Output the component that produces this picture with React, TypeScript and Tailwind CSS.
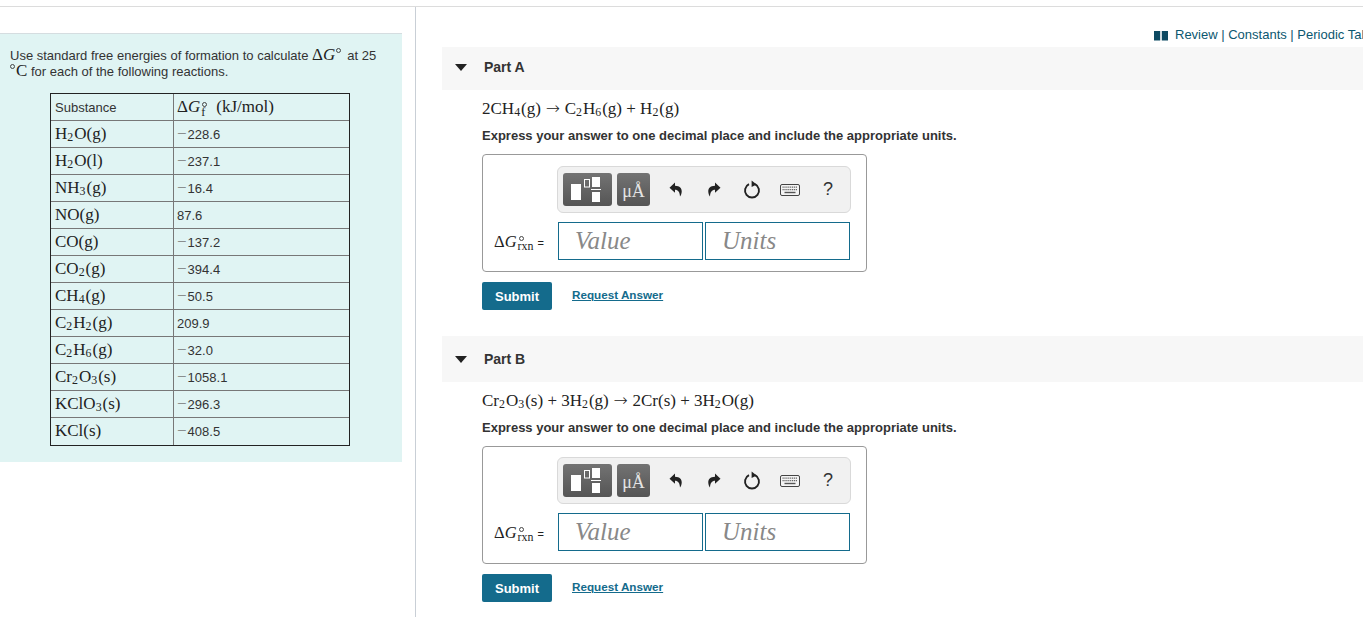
import type { ReactNode } from 'react';

const serif = "font-['Liberation_Serif',serif]";

// chemical formula written as text, digits after "_" become subscripts
const Formula = ({ text, className = '' }: { text: string; className?: string }) => {
  const parts = text.split(/(_\d|→)/);
  return (
    <span className={`${serif} text-[#222] whitespace-nowrap ${className}`}>
      {parts.map((part, i) => {
        if (part === '→') {
          return <span key={i} className="font-['DejaVu_Sans',sans-serif] text-[17px] font-light leading-none mx-[0.5px]">→</span>;
        }
        if (part.startsWith('_')) {
          return (
            <sub key={i} className="text-[0.7em] leading-none align-baseline relative top-[0.18em] mr-[1px]">
              {part.slice(1)}
            </sub>
          );
        }
        return <span key={i}>{part}</span>;
      })}
    </span>
  );
};

const rows = [
  ['H_2O(g)', '−228.6'],
  ['H_2O(l)', '−237.1'],
  ['NH_3(g)', '−16.4'],
  ['NO(g)', '87.6'],
  ['CO(g)', '−137.2'],
  ['CO_2(g)', '−394.4'],
  ['CH_4(g)', '−50.5'],
  ['C_2H_2(g)', '209.9'],
  ['C_2H_6(g)', '−32.0'],
  ['Cr_2O_3(s)', '−1058.1'],
  ['KClO_3(s)', '−296.3'],
  ['KCl(s)', '−408.5'],
];

const Ring = ({ className = '' }: { className?: string }) => (
  <span className={`inline-block w-[5px] h-[5px] rounded-full border border-[#444] ${className}`} />
);

// delta G with the degree ring above and an optional subscript under it
const Delta = ({ sub }: { sub?: string }) => (
  <span className={`${serif} whitespace-nowrap leading-none`}>
    Δ<i>G</i>
    {sub ? (
      <span className="relative ml-[1px] text-[0.72em] top-[0.3em]">
        <Ring className="absolute left-[1px] top-[-3px]" />
        {sub}
      </span>
    ) : (
      <Ring className="relative top-[-7px] ml-[1px]" />
    )}
  </span>
);

const Value = ({ value }: { value: string }) => {
  if (!value.startsWith('−')) return <>{value}</>;
  return (
    <>
      <span className={`${serif} text-[17px] leading-none text-[#777]`}>−</span>
      <span className="ml-[1px]">{value.slice(1)}</span>
    </>
  );
};

const DataTable = () => (
  <div className="ml-[50px] mt-[15px] w-[300px] border border-[#222]">
    <div className="flex h-[27px] border-b border-[#777]">
      <div className="w-[123px] border-r border-[#777] pl-[4px] text-[13px] leading-[27px] text-[#333]">Substance</div>
      <div className="pl-[3px] text-[17px] leading-[26px] text-[#222]">
        <Delta sub="f" />
        <span className={`${serif} ml-[11px]`}>(kJ/mol)</span>
      </div>
    </div>
    {rows.map(([name, value], i) => (
      <div key={name} className={`flex h-[27px] ${i < rows.length - 1 ? 'border-b border-[#777]' : ''}`}>
        <div className="w-[123px] border-r border-[#777] pl-[4px] text-[17px] leading-[26px]">
          <Formula text={name} />
        </div>
        <div className="pl-[3px] text-[13px] leading-[28px] text-[#333]">
          <Value value={value} />
        </div>
      </div>
    ))}
  </div>
);

const TemplatesIcon = () => (
  <svg width="49" height="33" viewBox="0 0 49 33">
    <rect x="8" y="11" width="10" height="16" fill="#fff" />
    <rect x="21.5" y="6.5" width="5" height="7.5" fill="none" stroke="#fff" />
    <rect x="29" y="4" width="8" height="10" fill="#fff" />
    <rect x="28" y="16" width="10" height="1" fill="#fff" />
    <rect x="29" y="19" width="8" height="10" fill="#fff" />
  </svg>
);

const Arrow = ({ flip }: { flip?: boolean }) => (
  <svg width="14" height="15" viewBox="0 0 14 15" className={flip ? '-scale-x-100' : ''}>
    <path d="M6 0.5 L0.5 5.8 L6 10.8 V7.8 C9 7.8 10.8 10 11 14.5 C13.6 11 14.2 4 6 3.8 Z" fill="#222" />
  </svg>
);

const ResetIcon = () => (
  <svg width="18" height="19" viewBox="0 0 18 19" fill="none">
    <path d="M6 4.2 A7 7 0 1 0 12 4.2" stroke="#222" strokeWidth="1.9" />
    <path d="M8.6 0.5 L13.6 4.4 L8.6 7 Z" fill="#222" />
  </svg>
);

const KeyboardIcon = () => (
  <svg width="20" height="12" viewBox="0 0 20 12">
    <rect x="0.5" y="0.5" width="19" height="11" rx="1.5" fill="#f4f4f4" stroke="#444" />
    <path d="M2.5 3.2H17.5M2.5 5.6H17.5" stroke="#666" strokeWidth="1.2" strokeDasharray="1.2 0.7" />
    <path d="M4.5 8.5H15.5" stroke="#555" strokeWidth="1.4" />
  </svg>
);

const Toolbar = () => (
  <div className="flex items-center w-[294px] h-[47px] rounded-[6px] border border-[#d9d9d9] bg-[#f1f1f1] pl-[5px]">
    <div className="w-[49px] h-[33px] rounded-[3px] bg-gradient-to-b from-[#737373] to-[#555]">
      <TemplatesIcon />
    </div>
    <div className={`${serif} ml-[5px] w-[33px] h-[33px] rounded-[3px] bg-gradient-to-b from-[#737373] to-[#555] text-[18px] leading-[37px] text-center text-[#e5e5e5]`}>
      μÅ
    </div>
    <div className="ml-[19px]"><Arrow /></div>
    <div className="ml-[24px]"><Arrow flip /></div>
    <div className="ml-[22px]"><ResetIcon /></div>
    <div className="ml-[19px]"><KeyboardIcon /></div>
    <div className="ml-[23px] text-[18px] text-[#333]">?</div>
  </div>
);

const AnswerBox = ({ boxClass }: { boxClass: string }) => (
  <div className={`mt-[10px] w-[385px] h-[118px] rounded-[4px] border border-[#999] ${boxClass}`}>
    <div className="pl-[74px]">
      <Toolbar />
    </div>
    <div className="flex items-center mt-[9px] pl-[11px]">
      <div className="w-[64px] text-[16.5px] text-[#222] whitespace-nowrap">
        <Delta sub="rxn" />
        <span className="text-[11px] ml-[4px]">=</span>
      </div>
      <div className={`${serif} w-[145px] h-[38px] border border-[#146b8c] pl-[16px] text-[25px] italic leading-[36px] text-[#888]`}>Value</div>
      <div className={`${serif} ml-[2px] w-[145px] h-[38px] border border-[#146b8c] pl-[16px] text-[25px] italic leading-[36px] text-[#888]`}>Units</div>
    </div>
  </div>
);

const Part = ({ title, equation, headerClass, topClass, boxClass }: { title: string; equation: ReactNode; headerClass: string; topClass: string; boxClass: string }) => (
  <section className={topClass}>
    <div className={`flex items-center bg-[#f7f7f7] ${headerClass}`}>
      <svg width="12" height="7" viewBox="0 0 12 7" className="ml-[13px]">
        <path d="M0 0H12L6 7Z" fill="#222" />
      </svg>
      <h2 className="ml-[17px] text-[14px] font-bold text-[#333]">{title}</h2>
    </div>
    <div className="pl-[40px]">
      <div className="mt-[7px] h-[24px] text-[17px] leading-[24px]">{equation}</div>
      <p className="mt-[7px] text-[13px] leading-[16px] font-bold text-[#333]">Express your answer to one decimal place and include the appropriate units.</p>
      <AnswerBox boxClass={boxClass} />
      <div className="flex items-center mt-[10px]">
        <button className="w-[70px] h-[28px] rounded-[2px] bg-[#146b8c] pt-[1px] text-[13px] font-bold text-white">Submit</button>
        <a className="ml-[20px] mb-[2px] text-[11.7px] font-bold text-[#146b8c] underline">Request Answer</a>
      </div>
    </div>
  </section>
);

export default function App() {
  return (
    <div className="h-[617px] overflow-hidden bg-white font-['Liberation_Sans',sans-serif]">
      <div className="h-[7px] border-b border-[#dcdcdc]" />
      <div className="flex h-[610px]">
        <div className="w-[416px] shrink-0 border-r border-[#c9cfd6] pt-[26px]">
          <div className="w-[402px] h-[429px] border-t border-[#d5dde0] bg-[#e0f4f3] pt-[12px]">
            <div className="pl-[10px] text-[13px] text-[#333]">
              <div className="h-[16px] leading-[16px] whitespace-nowrap">
                Use standard free energies of formation to calculate{' '}
                <span className="text-[17px] text-[#222]"><Delta /></span>
                <span className="ml-[6px]">at 25</span>
              </div>
              <div className="h-[16px] leading-[16px] whitespace-nowrap">
                <span className={`${serif} text-[17px] leading-none text-[#222]`}>
                  <Ring className="relative top-[-7px] mr-[1px]" />C
                </span>{' '}
                for each of the following reactions.
              </div>
            </div>
            <DataTable />
          </div>
        </div>
        <div className="flex-1 min-w-0 overflow-hidden pl-[26px]">
          <div className="flex items-center pl-[712px] h-[40px] pt-[16px] whitespace-nowrap text-[13px] text-[#0b5770]">
            <svg width="14" height="11" viewBox="0 0 14 11" className="shrink-0">
              <path d="M0 1H6.2V10.5H0ZM7.8 1H14V10.5H7.8Z" fill="#0d4a62" />
            </svg>
            <span className="ml-[7px]">Review | Constants | Periodic Table</span>
          </div>
          <Part
            title="Part A"
            topClass=""
            headerClass="h-[43px] pb-[2px]"
            boxClass="pt-[11px]"
            equation={<Formula text="2CH_4(g) → C_2H_6(g) + H_2(g)" />}
          />
          <Part
            title="Part B"
            topClass="mt-[26px]"
            headerClass="h-[46px]"
            boxClass="pt-[10px]"
            equation={<Formula text="Cr_2O_3(s) + 3H_2(g) → 2Cr(s) + 3H_2O(g)" />}
          />
        </div>
      </div>
    </div>
  );
}
